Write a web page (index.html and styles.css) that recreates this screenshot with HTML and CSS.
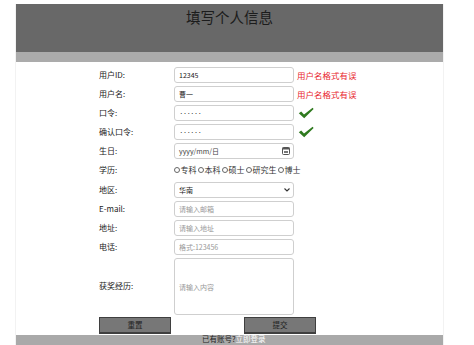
FILE: index.html
```
<!DOCTYPE html>
<html>
<head>
    <title>填写个人信息</title>
    <meta charset="UTF-8">
    <link rel="stylesheet" href="styles.css">
</head>
<body>
<div class="page">
    <header class="header">
        <h3>填写个人信息</h3>
    </header>
    <div class="band"></div>

    <form class="form">
        <label>用户ID:</label>
        <input class="field" type="text" value="12345">
        <span class="msg err">用户名格式有误</span>

        <label>用户名:</label>
        <input class="field" type="text" value="曹一">
        <span class="msg err">用户名格式有误</span>

        <label>口令:</label>
        <input class="field pwd" type="password" value="123456">
        <span class="msg">
            <svg class="check" width="16" height="12" viewBox="0 0 16 12"><path d="M0.8 6.2 L3.2 4.6 L6 7.6 L14.6 0.8 L15.6 2 L6.2 11.2 Z" fill="#2f7a1f"/></svg>
        </span>

        <label>确认口令:</label>
        <input class="field pwd" type="password" value="123456">
        <span class="msg">
            <svg class="check" width="16" height="12" viewBox="0 0 16 12"><path d="M0.8 6.2 L3.2 4.6 L6 7.6 L14.6 0.8 L15.6 2 L6.2 11.2 Z" fill="#2f7a1f"/></svg>
        </span>

        <label>生日:</label>
        <div class="field date">
            <span>yyyy/mm/日</span>
            <svg width="8" height="8" viewBox="0 0 8 8"><rect x="0.5" y="0.5" width="7" height="7" rx="1" fill="none" stroke="#555"/><rect x="0.5" y="0.5" width="7" height="2" fill="#555"/><rect x="2" y="4" width="4" height="2" fill="#777"/></svg>
        </div>
        <span class="msg"></span>

        <label>学历:</label>
        <div class="radios">
            <span><input type="radio" name="edu">专科</span>
            <span><input type="radio" name="edu">本科</span>
            <span><input type="radio" name="edu">硕士</span>
            <span><input type="radio" name="edu">研究生</span>
            <span><input type="radio" name="edu">博士</span>
        </div>
        <span class="msg"></span>

        <label>地区:</label>
        <div class="select-wrap">
            <select class="field">
                <option>华南</option>
                <option>华北</option>
                <option>华东</option>
            </select>
            <svg class="chevron" width="6" height="4" viewBox="0 0 6 4"><path d="M0.5 0.5 L3 3 L5.5 0.5" fill="none" stroke="#333" stroke-width="1.1"/></svg>
        </div>
        <span class="msg"></span>

        <label>E-mail:</label>
        <input class="field" type="text" placeholder="请输入邮箱">
        <span class="msg"></span>

        <label>地址:</label>
        <input class="field" type="text" placeholder="请输入地址">
        <span class="msg"></span>

        <label>电话:</label>
        <input class="field" type="text" placeholder="格式:123456">
        <span class="msg"></span>

        <label>获奖经历:</label>
        <textarea class="field area" placeholder="请输入内容"></textarea>
        <span class="msg"></span>
    </form>

    <div class="buttons">
        <button type="button">重置</button>
        <button type="button">提交</button>
    </div>

    <footer class="footer">
        已有账号?<a href="#">立即登录</a>
    </footer>
</div>
</body>
</html>
```

FILE: styles.css
```
body {
    margin: 0;
    font-family: "Noto Sans CJK SC", "Liberation Sans", sans-serif;
    color: #222;
    background: #fff;
}

.page {
    width: 429px;
    margin: 4px 0 0 15px;
    border-left: 1px solid #f2f2f2;
    border-right: 1px solid #f2f2f2;
    box-sizing: border-box;
}

.header {
    height: 48px;
    background: #686868;
    text-align: center;
}

.header h3 {
    margin: 0;
    padding-top: 2px;
    font-size: 14.5px;
    font-weight: normal;
    color: #1c1c1c;
}

.band {
    height: 10px;
    background: #ababab;
}

.form {
    display: grid;
    grid-template-columns: 75px 123px 1fr;
    row-gap: 3.1px;
    align-items: center;
    padding: 5px 0 0 83px;
}

.form label {
    font-size: 8px;
    line-height: 16px;
    color: #222;
}

.field {
    display: block;
    box-sizing: border-box;
    width: 120px;
    height: 16px;
    margin: 0;
    padding: 0 4px;
    border: 1px solid #cfcfcf;
    border-radius: 3px;
    font-family: inherit;
    font-size: 7px;
    line-height: 14px;
    color: #222;
    background: #fff;
    outline: none;
}

.field::placeholder {
    color: #999;
}

.pwd {
    font-size: 4.5px;
    letter-spacing: -0.8px;
}

.date {
    display: flex;
    align-items: center;
    justify-content: space-between;
    padding: 0 3px 0 4px;
    font-size: 7px;
    color: #444;
}

.radios {
    display: flex;
    white-space: nowrap;
    font-size: 8px;
    line-height: 16px;
    color: #333;
    gap: 1.5px;
}

.radios span {
    display: flex;
    align-items: center;
}

.radios input {
    appearance: none;
    width: 6px;
    height: 6px;
    margin: 0 0.5px 0 0;
    border: 1px solid #666;
    border-radius: 50%;
}

.select-wrap {
    position: relative;
    width: 120px;
    height: 16px;
}

.select-wrap select {
    appearance: none;
    padding: 0 4px;
}

.chevron {
    position: absolute;
    right: 4px;
    top: 6px;
}

.form .area {
    height: 57px;
    resize: none;
    padding: 25px 4px 0;
    line-height: 1;
}

.msg {
    font-size: 8.5px;
    line-height: 16px;
    color: #e8262c;
    white-space: nowrap;
}

.check {
    display: block;
    margin-left: 1px;
}

.buttons {
    display: flex;
    gap: 73px;
    padding: 2px 0 0 83px;
}

.buttons button {
    width: 72px;
    height: 17px;
    padding: 0;
    background: #777;
    border: 1px solid #3f3f3f;
    border-bottom-width: 2px;
    font-family: inherit;
    font-size: 7.5px;
    color: #222;
    cursor: pointer;
}

.footer {
    height: 12px;
    margin-top: 1px;
    background: #a9a9a9;
    padding-left: 186px;
    font-size: 7.5px;
    line-height: 8px;
    color: #222;
}

.footer a {
    color: #fff;
    text-decoration: none;
}
```
